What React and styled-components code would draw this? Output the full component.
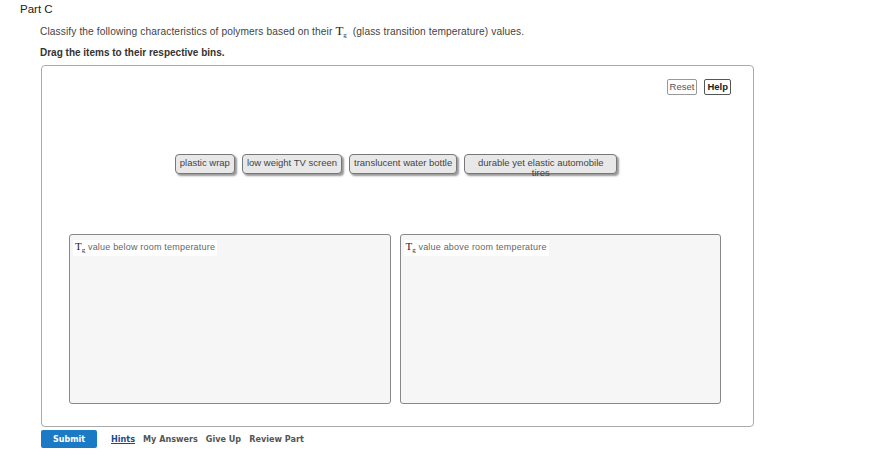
import React from "react";
import styled, { createGlobalStyle } from "styled-components";

const GlobalStyle = createGlobalStyle`
  body {
    margin: 0;
    background: #fff;
    font-family: "Liberation Sans", Arial, sans-serif;
    color: #333;
  }
`;

const items = [
  "plastic wrap",
  "low weight TV screen",
  "translucent water bottle",
  "durable yet elastic automobile tires",
];

const bins = ["value below room temperature", "value above room temperature"];

const Tg = ({ big }) => (
  <Sym big={big}>
    T<sub>g</sub>
  </Sym>
);

const App = () => {
  return (
    <Page>
      <GlobalStyle />
      <PartTitle>Part C</PartTitle>
      <Body>
        <Prompt>
          Classify the following characteristics of polymers based on their <Tg big />{" "}
          (glass transition temperature) values.
        </Prompt>
        <Instruction>Drag the items to their respective bins.</Instruction>
        <Panel>
          <Toolbar>
            <ToolButton>Reset</ToolButton>
            <ToolButton bold>Help</ToolButton>
          </Toolbar>
          <ChipRow>
            {items.map((item) => (
              <Chip key={item} wide={item.length > 30}>
                {item}
              </Chip>
            ))}
          </ChipRow>
          <BinRow>
            {bins.map((label) => (
              <Bin key={label}>
                <BinLabel>
                  <Tg /> {label}
                </BinLabel>
              </Bin>
            ))}
          </BinRow>
        </Panel>
        <Footer>
          <SubmitButton>Submit</SubmitButton>
          <FooterLink primary>Hints</FooterLink>
          <FooterLink>My Answers</FooterLink>
          <FooterLink>Give Up</FooterLink>
          <FooterLink>Review Part</FooterLink>
        </Footer>
      </Body>
    </Page>
  );
};

export default App;

const Page = styled.div`
  padding: 3px 0 0 20px;
`;

const PartTitle = styled.div`
  font-size: 11.5px;
  color: #222;
  line-height: 13px;
`;

const Body = styled.div`
  padding-left: 20px;
`;

const Prompt = styled.div`
  margin-top: 9px;
  font-size: 10.2px;
  letter-spacing: 0.1px;
  color: #444;
  line-height: 12px;
`;

const Sym = styled.span`
  font-family: "Liberation Serif", "Times New Roman", serif;
  font-size: ${(p) => (p.big ? "13px" : "11px")};
  margin-right: ${(p) => (p.big ? "3px" : "0")};
  letter-spacing: 0;
  color: #222;

  sub {
    font-size: 7px;
    vertical-align: -2px;
  }
`;

const Instruction = styled.div`
  margin-top: 6px;
  font-size: 10px;
  font-weight: bold;
  color: #333;
  line-height: 11px;
`;

const Panel = styled.div`
  margin: 7px 0 0 1px;
  width: 713px;
  height: 362px;
  box-sizing: border-box;
  border: 1px solid #aaa;
  border-radius: 4px;
  padding: 13px 22px 0 27px;
  display: flex;
  flex-direction: column;
`;

const Toolbar = styled.div`
  display: flex;
  justify-content: flex-end;
  gap: 7px;
`;

const ToolButton = styled.button`
  height: 16px;
  padding: 0 2px;
  font-family: "Liberation Sans", Arial, sans-serif;
  font-size: 9.5px;
  font-weight: ${(p) => (p.bold ? "bold" : "normal")};
  color: ${(p) => (p.bold ? "#222" : "#555")};
  background: #fff;
  border: 1px solid ${(p) => (p.bold ? "#555" : "#999")};
  border-radius: 2px;
  line-height: 14px;
`;

const ChipRow = styled.div`
  margin-top: 59px;
  display: flex;
  justify-content: center;
  gap: 7px;
  padding-right: 8px;
`;

const Chip = styled.div`
  height: 20px;
  box-sizing: border-box;
  width: ${(p) => (p.wide ? "153px" : "auto")};
  padding: 3px 4px 0;
  font-size: 9.5px;
  line-height: 10px;
  color: #444;
  text-align: center;
  background: #e8e8e8;
  border: 1px solid #777;
  border-radius: 4px;
  box-shadow: 2px 2px 2px #999;
  white-space: ${(p) => (p.wide ? "normal" : "nowrap")};
`;

const BinRow = styled.div`
  margin-top: 60px;
  margin-right: 10px;
  display: grid;
  grid-template-columns: 1fr 1fr;
  gap: 9px;
`;

const Bin = styled.div`
  height: 170px;
  box-sizing: border-box;
  background: #f6f6f6;
  border: 1px solid #888;
  border-radius: 3px;
  padding: 1px 3px;
`;

const BinLabel = styled.span`
  display: inline-block;
  background: #fff;
  padding: 0 2px;
  font-size: 9px;
  letter-spacing: 0.2px;
  color: #666;
  line-height: 12px;
`;

const Footer = styled.div`
  margin: 3px 0 0 1px;
  display: flex;
  align-items: center;
`;

const SubmitButton = styled.button`
  width: 56px;
  height: 18px;
  margin-right: 14px;
  background: #1b7ac3;
  color: #fff;
  border: none;
  border-radius: 2px;
  font-family: "DejaVu Sans", Verdana, sans-serif;
  font-size: 8px;
  font-weight: bold;
`;

const FooterLink = styled.span`
  margin-right: 8px;
  font-family: "DejaVu Sans", Verdana, sans-serif;
  font-size: 8.1px;
  font-weight: bold;
  color: ${(p) => (p.primary ? "#1a4a8a" : "#555")};
  text-decoration: ${(p) => (p.primary ? "underline" : "none")};
`;
